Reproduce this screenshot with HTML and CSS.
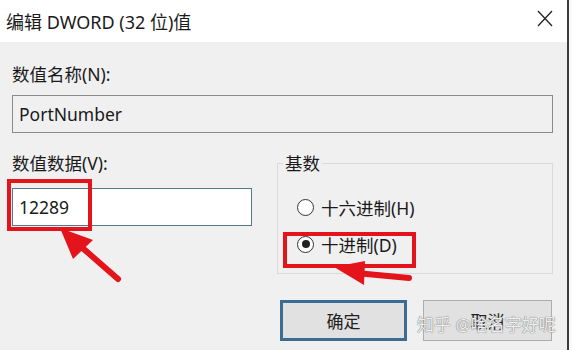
FILE: index.html
```html
<!DOCTYPE html>
<html lang="zh-CN">
<head>
  <meta charset="UTF-8">
  <title>编辑 DWORD (32 位)值</title>
  <link rel="stylesheet" href="styles.css">
</head>
<body>

  <div class="window">
    <div class="titlebar">
      <span class="title">编辑 DWORD (32 位)值</span>
      <svg class="close" width="16" height="17" viewBox="0 0 16 17">
        <path d="M1 1 L15 16 M15 1 L1 16" stroke="#222" stroke-width="1.3" fill="none"/>
      </svg>
    </div>

    <div class="content">
      <div class="label first">数值名称(N):</div>
      <div class="field name">PortNumber</div>

      <div class="row">
        <div class="col">
          <div class="label">数值数据(V):</div>
          <div class="field value">12289</div>
        </div>
        <fieldset class="group">
          <legend>基数</legend>
          <label class="radio"><span class="dot"></span>十六进制(H)</label>
          <label class="radio checked"><span class="dot"></span>十进制(D)</label>
        </fieldset>
      </div>

      <div class="buttons">
        <button class="btn ok">确定</button>
        <button class="btn">取消</button>
      </div>
    </div>

    <!-- red annotations drawn over the dialog -->
    <svg class="marks" width="572" height="350" viewBox="0 0 572 350">
      <rect x="9" y="181" width="81" height="48" fill="none" stroke="#e3141c" stroke-width="4"/>
      <rect x="285" y="234" width="129" height="32" fill="none" stroke="#e3141c" stroke-width="4"/>
      <line x1="118" y1="279" x2="78" y2="244" stroke="#e3141c" stroke-width="6" stroke-linecap="round"/>
      <polygon points="60,228 93,240 73,259" fill="#e3141c"/>
      <line x1="409" y1="278" x2="356" y2="273" stroke="#e3141c" stroke-width="6" stroke-linecap="round"/>
      <polygon points="334,267 365,261 364,285" fill="#e3141c"/>
    </svg>

    <div class="watermark">知乎 @啥名字好呢</div>
  </div>

</body>
</html>
```

FILE: styles.css
```css
body {
  margin: 0;
  background: #fafafa;
  font-family: "Noto Sans", "Noto Sans CJK SC", sans-serif;
  color: #1a1a1a;
}
.window {
  position: relative;
  width: 567px;
  height: 350px;
  background: #f0f0f0;
  border-right: 2px solid #3c3c3c;
  overflow: hidden;
}
.titlebar {
  height: 42px;
  background: #fff;
  display: flex;
  align-items: center;
  justify-content: space-between;
  padding: 0 14px 0 6px;
}
.title {
  font-size: 18px;
}
.close {
  margin-top: -5px;
}
.content {
  padding: 0 14px 0 12px;
  font-size: 17.5px;
}
.label {
  height: 20px;
  line-height: 20px;
}
.label.first {
  margin-top: 22px;
}
.field {
  height: 36px;
  line-height: 36px;
  padding-left: 6px;
}
.name {
  margin-top: 11px;
  border: 1px solid #8a8a8a;
  background: #f0f0f0;
}
.row {
  display: grid;
  grid-template-columns: 240px 1fr;
  gap: 25px;
  margin-top: 20px;
}
.value {
  margin-top: 15px;
  border: 1px solid #56788f;
  background: #fff;
}
.group {
  margin: 0;
  padding: 24px 0 19px 19px;
  border: 1px solid #dadada;
  display: flex;
  flex-direction: column;
  gap: 17px;
}
.group legend {
  margin-left: -14px;
  padding: 0 2px;
  height: 20px;
  line-height: 20px;
}
.radio {
  display: flex;
  align-items: center;
  gap: 7px;
  height: 20px;
}
.dot {
  width: 15px;
  height: 15px;
  border: 1px solid #333;
  border-radius: 50%;
  background: #fff;
  display: flex;
  align-items: center;
  justify-content: center;
}
.checked .dot::after {
  content: "";
  width: 8px;
  height: 8px;
  border-radius: 50%;
  background: #222;
}
.buttons {
  display: flex;
  justify-content: flex-end;
  gap: 16px;
  margin-top: 26px;
  padding-right: 1px;
}
.btn {
  width: 129px;
  height: 41px;
  font-family: inherit;
  font-size: 17px;
  color: #222;
  background: #e1e1e1;
  border: 1px solid #adadad;
}
.btn.ok {
  width: 127px;
  border: 3px solid #3b6c91;
}
.marks {
  position: absolute;
  top: 0;
  left: 0;
  pointer-events: none;
}
.watermark {
  position: absolute;
  left: 417px;
  top: 311px;
  font-size: 17px;
  color: rgba(255, 255, 255, 0.9);
  text-shadow: 0 0 1px #777, 0 0 1px #777;
  white-space: nowrap;
}
```
